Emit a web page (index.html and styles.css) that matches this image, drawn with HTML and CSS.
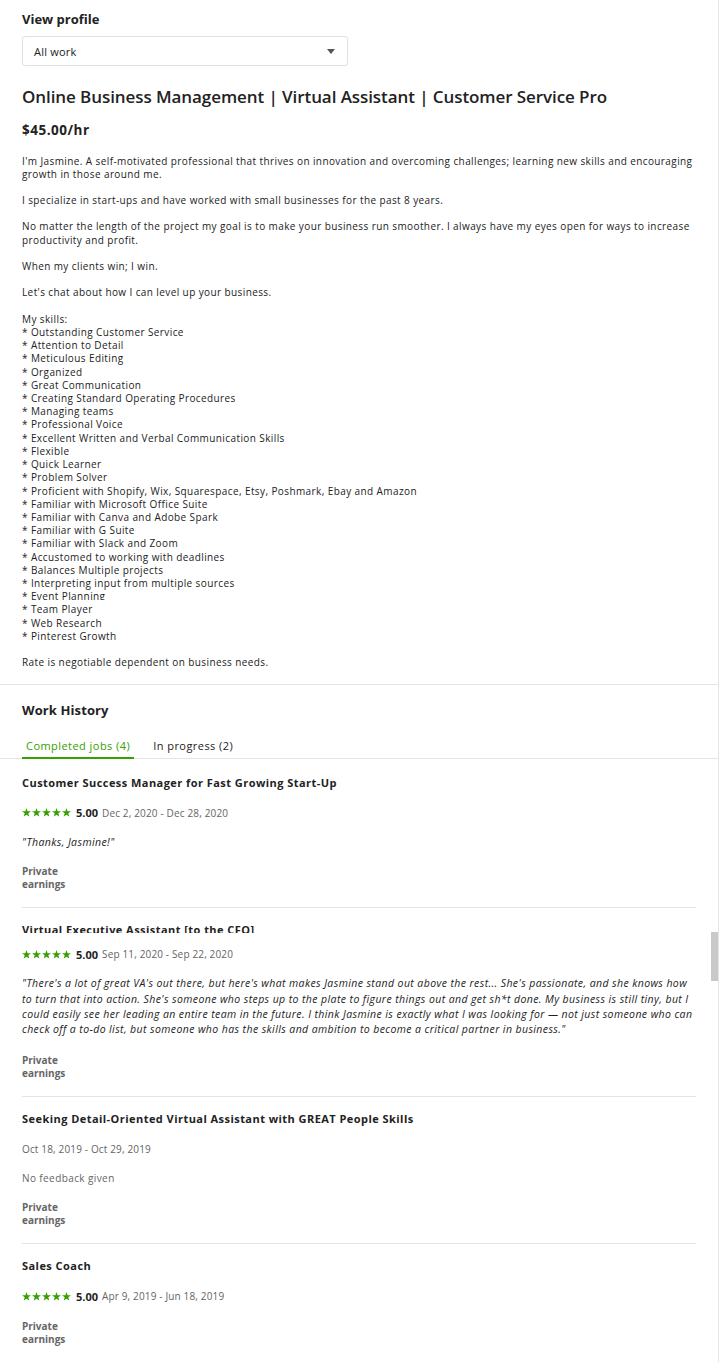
FILE: index.html
```html
<!DOCTYPE html>
<html>
<head>
<meta charset="utf-8">
<link rel="stylesheet" href="styles.css">
</head>
<body>
<div class="page">
  <section class="profile">
    <div class="vp">View profile</div>
    <div class="dropdown"><span>All work</span><span class="caret"></span></div>
    <h1 class="title">Online Business Management | Virtual Assistant | Customer Service Pro</h1>
    <div class="rate">$45.00/hr</div>
    <div class="bio">
      <p>I'm Jasmine. A self-motivated professional that thrives on innovation and overcoming challenges; learning new skills and encouraging growth in those around me.</p>
      <p>I specialize in start-ups and have worked with small businesses for the past 8 years.</p>
      <p>No matter the length of the project my goal is to make your business run smoother. I always have my eyes open for ways to increase productivity and profit.</p>
      <p>When my clients win; I win.</p>
      <p>Let's chat about how I can level up your business.</p>
      <p>My skills:<br>
      * Outstanding Customer Service<br>
      * Attention to Detail<br>
      * Meticulous Editing<br>
      * Organized<br>
      * Great Communication<br>
      * Creating Standard Operating Procedures<br>
      * Managing teams<br>
      * Professional Voice<br>
      * Excellent Written and Verbal Communication Skills<br>
      * Flexible<br>
      * Quick Learner<br>
      * Problem Solver<br>
      * Proficient with Shopify, Wix, Squarespace, Etsy, Poshmark, Ebay and Amazon<br>
      * Familiar with Microsoft Office Suite<br>
      * Familiar with Canva and Adobe Spark<br>
      * Familiar with G Suite<br>
      * Familiar with Slack and Zoom<br>
      * Accustomed to working with deadlines<br>
      * Balances Multiple projects<br>
      * Interpreting input from multiple sources<br>
      <span class="cut">* Event Planning</span><br>
      * Team Player<br>
      * Web Research<br>
      * Pinterest Growth</p>
      <p>Rate is negotiable dependent on business needs.</p>
    </div>
  </section>

  <section class="history">
    <h2 class="wh">Work History</h2>
    <div class="tabs">
      <span class="tab active">Completed jobs (4)</span>
      <span class="tab">In progress (2)</span>
    </div>
    <div class="jobs">
      <div class="job">
        <div class="jtitle">Customer Success Manager for Fast Growing Start-Up</div>
        <div class="meta">
          <svg class="stars" width="50" height="9" viewBox="0 0 50 9"><g fill="#37a000"><path id="s" d="M4.5 0 L5.6 3.2 L9 3.3 L6.3 5.3 L7.3 8.6 L4.5 6.7 L1.7 8.6 L2.7 5.3 L0 3.3 L3.4 3.2 Z"/><use href="#s" x="10"/><use href="#s" x="20"/><use href="#s" x="30"/><use href="#s" x="40"/></g></svg>
          <b class="score">5.00</b><span class="date">Dec 2, 2020 - Dec 28, 2020</span>
        </div>
        <div class="quote">"Thanks, Jasmine!"</div>
        <div class="earn">Private<br>earnings</div>
      </div>
      <div class="job">
        <div class="jtitle clipped">Virtual Executive Assistant [to the CFO]</div>
        <div class="meta">
          <svg class="stars" width="50" height="9" viewBox="0 0 50 9"><g fill="#37a000"><use href="#s" x="0"/><use href="#s" x="10"/><use href="#s" x="20"/><use href="#s" x="30"/><use href="#s" x="40"/></g></svg>
          <b class="score">5.00</b><span class="date">Sep 11, 2020 - Sep 22, 2020</span>
        </div>
        <div class="quote long">"There's a lot of great VA's out there, but here's what makes Jasmine stand out above the rest... She's passionate, and she knows how to turn that into action. She's someone who steps up to the plate to figure things out and get sh*t done. My business is still tiny, but I could easily see her leading an entire team in the future. I think Jasmine is exactly what I was looking for — not just someone who can check off a to-do list, but someone who has the skills and ambition to become a critical partner in business."</div>
        <div class="earn">Private<br>earnings</div>
      </div>
      <div class="job">
        <div class="jtitle">Seeking Detail-Oriented Virtual Assistant with GREAT People Skills</div>
        <div class="meta"><span class="date">Oct 18, 2019 - Oct 29, 2019</span></div>
        <div class="nofb">No feedback given</div>
        <div class="earn">Private<br>earnings</div>
      </div>
      <div class="job">
        <div class="jtitle">Sales Coach</div>
        <div class="meta">
          <svg class="stars" width="50" height="9" viewBox="0 0 50 9"><g fill="#37a000"><use href="#s" x="0"/><use href="#s" x="10"/><use href="#s" x="20"/><use href="#s" x="30"/><use href="#s" x="40"/></g></svg>
          <b class="score">5.00</b><span class="date">Apr 9, 2019 - Jun 18, 2019</span>
        </div>
        <div class="earn">Private<br>earnings</div>
      </div>
    </div>
  </section>
  <div class="scrollthumb"></div>
</div>
</body>
</html>
```

FILE: styles.css
```css
* { box-sizing: border-box; }
html, body { margin: 0; padding: 0; background: #fff; }
body {
  font-family: "Open Sans", "Lato", sans-serif;
  color: #222;
  width: 719px;
  height: 1362px;
  overflow: hidden;
}
.page {
  position: relative;
  width: 719px;
  min-height: 1362px;
  border-right: 1px solid #e4e4e4;
}
.profile {
  padding: 11px 22px 15px 22px;
  border-bottom: 1px solid #e4e4e4;
}
.vp {
  font-size: 13px;
  font-weight: 700;
  line-height: 16px;
}
.dropdown {
  margin-top: 9px;
  width: 326px;
  height: 30px;
  border: 1px solid #e0e0e0;
  border-radius: 3px;
  display: flex;
  align-items: center;
  justify-content: space-between;
  padding: 0 12px 0 11px;
  font-size: 11px;
  letter-spacing: 0.2px;
}
.caret {
  width: 0; height: 0;
  border-left: 4.5px solid transparent;
  border-right: 4.5px solid transparent;
  border-top: 5px solid #555;
}
.title {
  margin: 20px 0 0 0;
  font-size: 17px;
  font-weight: 600;
  line-height: 22px;
  letter-spacing: -0.08px;
}
.rate {
  margin-top: 14px;
  font-size: 13.5px;
  font-weight: 700;
  line-height: 16px;
  letter-spacing: 0.5px;
}
.bio {
  margin-top: 16.5px;
  font-size: 10px;
  line-height: 13.2px;
  letter-spacing: 0.4px;
}
.bio p { margin: 0 0 13.2px 0; }
.bio p:last-child { margin-bottom: 0; }
.cut {
  display: inline-block;
  height: 9.5px;
  overflow: hidden;
  vertical-align: top;
}
.history { padding-top: 17px; }
.wh {
  margin: 0 0 0 22px;
  font-size: 13px;
  font-weight: 700;
  line-height: 16px;
  letter-spacing: 0.1px;
}
.tabs {
  margin-top: 21px;
  padding-left: 22px;
  display: flex;
  gap: 15px;
  border-bottom: 1px solid #e4e4e4;
  font-size: 11px;
  letter-spacing: 0.45px;
}
.tab {
  padding: 0 4px 4px 4px;
  line-height: 14px;
  margin-bottom: -1px;
  border-bottom: 2px solid transparent;
}
.tab.active { color: #37a000; border-bottom-color: #37a000; }
.jobs { padding: 0 22px; }
.job {
  padding: 15px 0 16px 0;
  border-bottom: 1px solid #e4e4e4;
}
.job:first-child { padding-top: 16.5px; }
.job:last-child { border-bottom: none; }
.jtitle {
  font-size: 11px;
  font-weight: 700;
  line-height: 14px;
  letter-spacing: 0.45px;
}
.jtitle.clipped { height: 9.5px; overflow: hidden; margin-bottom: -1.5px; }
.meta {
  margin-top: 16px;
  display: flex;
  align-items: center;
  height: 14px;
  font-size: 10px;
}
.stars { display: block; margin-right: 4px; }
.score { font-size: 11px; font-weight: 700; margin-right: 4px; }
.date { color: #656565; letter-spacing: 0.15px; }
.quote {
  margin-top: 15px;
  font-size: 10.5px;
  font-style: italic;
  line-height: 14px;
  letter-spacing: 0.4px;
}
.quote.long { line-height: 15.3px; }
.nofb { margin-top: 15px; font-size: 10px; line-height: 14px; color: #656565; letter-spacing: 0.4px; }
.earn {
  margin-top: 16.5px;
  font-size: 10px;
  font-weight: 700;
  line-height: 13px;
  color: #656565;
}
.quote.long + .earn { margin-top: 16px; }
.scrollthumb {
  position: absolute;
  left: 711px;
  top: 932px;
  width: 7px;
  height: 49px;
  background: #c9c9c9;
}
```
